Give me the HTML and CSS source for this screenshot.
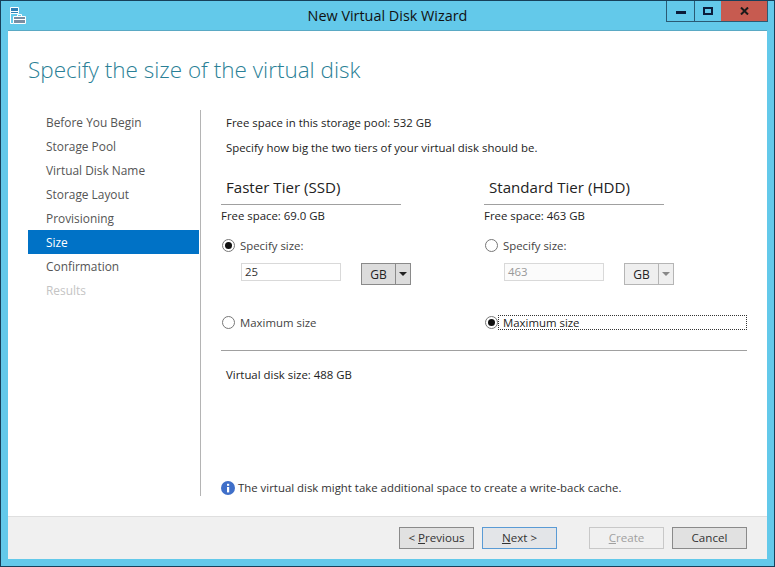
FILE: index.html
```html
<!DOCTYPE html>
<html lang="en">
<head>
<meta charset="utf-8">
<title>New Virtual Disk Wizard</title>
<link rel="stylesheet" href="styles.css">
</head>
<body>
<div class="window">
  <header class="titlebar">
    <svg class="appicon" width="16" height="17" viewBox="0 0 16 17">
      <path d="M0.5 0.5H8.5V4.5H0.5Z M0.5 4.5H8.5V6.5H0.5Z" fill="#2f7fb5" stroke="#fff"/>
      <path d="M0.5 6.5V16.5H3" fill="none" stroke="#fff"/>
      <path d="M3.5 9.5H15.5V16.5H3.5Z" fill="#7a8ea3" stroke="#fff"/>
      <path d="M7.5 9V7.5H11.5V9" fill="none" stroke="#fff"/>
      <path d="M4 12.5H15" stroke="#fff"/>
    </svg>
    <div class="wintitle">New Virtual Disk Wizard</div>
    <div class="controls">
      <div class="ctl ctl-min"><span class="min-glyph"></span></div>
      <div class="ctl ctl-max"><span class="max-glyph"></span></div>
      <div class="ctl ctl-close"><svg width="9" height="8" viewBox="0 0 9 8"><path d="M1 0.5L8 7.5M8 0.5L1 7.5" stroke="#1a1a1a" stroke-width="2"/></svg></div>
    </div>
  </header>
  <div class="client">
    <h1 class="pagetitle">Specify the size of the virtual disk</h1>
    <div class="body">
      <nav class="nav">
        <div class="navitem">Before You Begin</div>
        <div class="navitem">Storage Pool</div>
        <div class="navitem">Virtual Disk Name</div>
        <div class="navitem">Storage Layout</div>
        <div class="navitem">Provisioning</div>
        <div class="navitem active">Size</div>
        <div class="navitem">Confirmation</div>
        <div class="navitem dim">Results</div>
      </nav>
      <main class="content">
        <p class="line first">Free space in this storage pool: 532 GB</p>
        <p class="line second">Specify how big the two tiers of your virtual disk should be.</p>
        <div class="tiers">
          <section class="tier">
            <h2 class="tiertitle">Faster Tier (SSD)</h2>
            <div class="free">Free space: 69.0 GB</div>
            <label class="radio"><span class="dot on"></span><span>Specify size:</span></label>
            <div class="sizerow">
              <div class="input">25</div>
              <div class="combo"><span class="combo-val">GB</span><span class="combo-arrow"><i class="tri"></i></span></div>
            </div>
            <label class="radio maxrow"><span class="dot"></span><span>Maximum size</span></label>
          </section>
          <section class="tier tier2">
            <h2 class="tiertitle">Standard Tier (HDD)</h2>
            <div class="free">Free space: 463 GB</div>
            <label class="radio"><span class="dot"></span><span>Specify size:</span></label>
            <div class="sizerow">
              <div class="input disabled">463</div>
              <div class="combo disabled"><span class="combo-val">GB</span><span class="combo-arrow"><i class="tri"></i></span></div>
            </div>
            <label class="radio maxrow"><span class="dot on"></span><span class="focus">Maximum size</span></label>
          </section>
        </div>
        <hr class="rule">
        <p class="line total">Virtual disk size: 488 GB</p>
        <div class="note">
          <svg class="info" width="14" height="14" viewBox="0 0 14 14"><circle cx="7" cy="7" r="7" fill="#3f6fc9"/><rect x="6" y="6" width="2.2" height="5.4" fill="#fff"/><rect x="6" y="2.8" width="2.2" height="2" fill="#fff"/></svg>
          <span>The virtual disk might take additional space to create a write-back cache.</span>
        </div>
      </main>
    </div>
    <footer class="footer">
      <button class="btn">&lt; <u>P</u>revious</button>
      <button class="btn default"><u>N</u>ext &gt;</button>
      <button class="btn disabled gap"><u>C</u>reate</button>
      <button class="btn">Cancel</button>
    </footer>
  </div>
</div>
</body>
</html>
```
FILE: styles.css
```css
* { box-sizing: border-box; }
html, body { margin: 0; height: 100%; }
body { font-family: "Open Sans", "Noto Sans", sans-serif; font-size: 11.4px; color: #333; overflow: hidden; }
.window { width: 775px; height: 567px; background: #63c9ea; border: 1px solid #17405a; display: flex; flex-direction: column; padding: 0 7px 7px; }
.titlebar { height: 30px; flex: none; display: flex; position: relative; align-items: flex-start; }
.appicon { margin-top: 6px; margin-left: 2px; }
.wintitle { position: absolute; left: 0; right: 0; top: 5px; text-align: center; font-size: 14.4px; color: #111; line-height: 20px; }
.controls { position: relative; margin-left: auto; display: flex; height: 21px; margin-right: -1px; border: 1px solid #2a5a74; border-top: 0; }
.ctl { display: flex; align-items: center; justify-content: center; }
.ctl-min { width: 28px; border-right: 1px solid #2a5a74; }
.ctl-max { width: 26px; }
.ctl-close { width: 46px; background: #c75b50; }
.min-glyph { width: 10px; height: 3px; background: #0b1c3a; margin-top: 3px; }
.max-glyph { width: 10px; height: 8px; border: 2px solid #0b1c3a; }
.client { flex: 1; background: #fff; display: flex; flex-direction: column; min-height: 0; box-shadow: 0 -1px 0 #5aa9c4; }
.pagetitle { margin: 0; padding: 21px 0 0 20px; height: 79px; font-size: 22.5px; font-weight: 300; color: #2a7f96; line-height: 36px; }
.body { flex: 1; display: flex; padding-left: 20px; min-height: 0; }
.nav { height: 386px; border-right: 1px solid #b4b4b4; width: 173px; flex: none; font-size: 11.9px; }
.navitem { height: 24px; line-height: 25px; padding-left: 18px; color: #555; margin-right: 1px; }
.navitem.active { background: #0072c6; color: #fff; }
.navitem.dim { color: #c4c4c4; }
.content { flex: 1; padding: 0 20px 0 20px; display: flex; flex-direction: column; position: relative; }
.line { margin: 0; line-height: 16px; padding-left: 5px; color: #222; }
.line.first { padding-top: 5px; height: 21px; }
.line.second { margin-top: 9px; }
.tiers { display: flex; margin-top: 21px; }
.tier { width: 263px; flex: none; }
.tiertitle { margin: 0; font-size: 15.1px; font-weight: 400; color: #222; width: 180px; height: 28px; line-height: 20px; padding-left: 5px; border-bottom: 1px solid #a0a0a0; }
.free { line-height: 16px; margin-top: 3px; color: #222; }
.radio { display: flex; align-items: center; height: 18px; margin-top: 12px; gap: 5px; color: #444; }
.dot { width: 13px; height: 13px; border-radius: 50%; border: 1px solid #777; background: #fff; position: relative; flex: none; margin-left: 1px; }
.dot.on::after { content: ""; position: absolute; left: 2px; top: 2px; width: 7px; height: 7px; border-radius: 50%; background: #111; }
.sizerow { display: flex; margin-top: 9px; padding-left: 20px; gap: 20px; }
.input { width: 100px; height: 18px; border: 1px solid #d9d9d9; line-height: 16px; padding-left: 3px; color: #333; }
.input.disabled { color: #999; background: #fbfbfb; }
.combo { width: 50px; height: 22px; border: 1px solid #8a8a8a; background: #dcdcdc; display: flex; color: #222; }
.combo-val { width: 33px; text-align: center; line-height: 22px; font-size: 12px; }
.combo-arrow { width: 15px; border-left: 1px solid #8a8a8a; display: flex; align-items: center; justify-content: center; }
.tri { border: 4px solid transparent; border-top: 4px solid #222; border-bottom: 0; }
.combo.disabled { background: #efefef; border-color: #b5b5b5; }
.combo.disabled .combo-arrow { border-left-color: #b5b5b5; }
.combo.disabled .tri { border-top-color: #888; }
.maxrow { margin-top: 28px; }
.focus { flex: 1; border: 1px dotted #333; line-height: 13px; margin-left: -5px; height: 15px; color: #222; padding-left: 4px; }
.rule { margin: 19px 0 0; border: 0; border-top: 1px solid #a0a0a0; }
.total { margin-top: 16px; }
.note { position: absolute; left: 20px; top: 370px; display: flex; align-items: center; gap: 3px; color: #333; }
.footer { height: 43px; flex: none; background: #f0f0f0; border-top: 1px solid #dfdfdf; display: flex; justify-content: flex-end; padding: 10px 20px 0 0; gap: 8px; margin-top: auto; }
.btn { width: 75px; height: 22px; padding: 0; border: 1px solid #8a8a8a; background: #e1e1e1; font: inherit; font-size: 11.6px; color: #333; line-height: 18px; }
.btn.default { border-color: #5a9bd5; background: #e3e5e8; margin-right: 24px; }
.btn.disabled { border-color: #c8c8c8; background: #f0f0f0; color: #a0a0a0; }
```
